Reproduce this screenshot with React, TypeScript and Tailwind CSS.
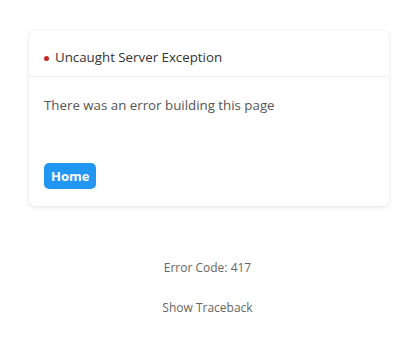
export default function App() {
  return (
    <div className="min-h-[353px] bg-white pt-[31px] font-['Open_Sans','Noto_Sans',sans-serif]">
      <div className="ml-[29px] w-[360px] rounded-md bg-white shadow-[0_1px_4px_rgba(0,0,0,0.12)]">
        <div className="flex h-[46px] items-center gap-[6px] border-b border-[#f0f0f0] px-[15px] pt-[9px]">
          <span className="h-[5px] w-[5px] rounded-full bg-[#c62828]" />
          <span className="text-[13.3px] text-[#333]">Uncaught Server Exception</span>
        </div>
        <div className="px-[15px] pt-[18px] pb-[17px]">
          <p className="text-[13.3px] leading-[20px] text-[#555]">There was an error building this page</p>
          <button className="mt-[48px] h-[26px] rounded-[5px] bg-[#2196f3] px-[7px] pt-[2px] text-[13px] font-bold text-white">
            Home
          </button>
        </div>
      </div>
      <div className="mt-[53px] text-center text-[12px] text-[#666]">Error Code: 417</div>
      <div className="mt-[22px] text-center text-[12px] text-[#666]">Show Traceback</div>
    </div>
  )
}
